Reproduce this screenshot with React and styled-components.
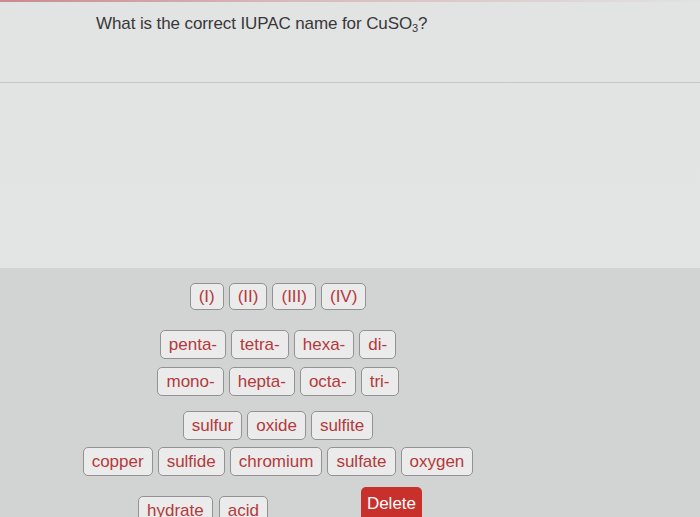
import React from 'react';
import styled, { createGlobalStyle } from 'styled-components';

const GlobalStyle = createGlobalStyle`
    html, body {
        margin: 0;
        padding: 0;
        background: #d3d4d4;
    }
    * {
        box-sizing: border-box;
    }
`;

const Page = styled.div`
    width: 700px;
    height: 517px;
    overflow: hidden;
    display: flex;
    flex-direction: column;
    font-family: "Liberation Sans", Arial, sans-serif;
    background: linear-gradient(180deg, #e2e3e3 0%, #e3e4e4 50%, #dcdddd 100%);
`;

const TopStrip = styled.div`
    flex-shrink: 0;
    height: 2px;
    background: linear-gradient(90deg, #c98a90 0%, #d8b8bb 40%, #e1e2e2 100%);
`;

const Header = styled.div`
    flex-shrink: 0;
    height: 81px;
    padding: 12px 0 0 96px;
    border-bottom: 1px solid #c6c7c7;
`;

const Question = styled.p`
    margin: 0;
    font-size: 17px;
    color: #383838;
    letter-spacing: -0.1px;

    sub {
        font-size: 11px;
        vertical-align: -3px;
        line-height: 0;
    }
`;

const Blank = styled.div`
    flex-shrink: 0;
    height: 185px;
`;

const AnswerArea = styled.div`
    flex-shrink: 0;
    flex-grow: 1;
    background: #d2d3d3;
    width: 556px;
    padding-top: 15px;
    display: flex;
    flex-direction: column;
    align-items: center;
    box-shadow: 144px 0 0 #d2d3d3;
`;

const Group = styled.div`
    display: flex;
    flex-direction: column;
    align-items: center;
    gap: ${ p => p.gap || 8 }px;
    margin-bottom: ${ p => p.after || 0 }px;
`;

const Row = styled.div`
    display: flex;
    gap: 5px;
    justify-content: center;
`;

const Chip = styled.div`
    height: ${ p => p.small ? 27 : 29 }px;
    padding: 0 8px;
    display: flex;
    align-items: center;
    background: #ebebeb;
    border: 1px solid #929292;
    border-radius: 5px;
    color: #b33a3b;
    font-size: 17px;
    white-space: nowrap;
`;

const BottomRow = styled.div`
    display: flex;
    align-items: flex-start;
    padding-left: 4px;
`;

const ChipPair = styled.div`
    display: flex;
    gap: 6px;
    margin-top: 9px;
    margin-right: 93px;
`;

const DeleteButton = styled.button`
    height: 34px;
    padding: 0 6px;
    border: none;
    border-radius: 5px;
    background: #c7302b;
    color: #ffffff;
    font-family: "Liberation Sans", Arial, sans-serif;
    font-size: 17px;
`;

const numerals = ['(I)', '(II)', '(III)', '(IV)'];
const prefixes = [['penta-', 'tetra-', 'hexa-', 'di-'], ['mono-', 'hepta-', 'octa-', 'tri-']];
const words = [['sulfur', 'oxide', 'sulfite'], ['copper', 'sulfide', 'chromium', 'sulfate', 'oxygen']];

export default function App() {
    return (
        <>
            <GlobalStyle />
            <Page>
                <TopStrip />
                <Header>
                    <Question>What is the correct IUPAC name for CuSO<sub>3</sub>?</Question>
                </Header>
                <Blank />
                <AnswerArea>
                    <Group after={ 20 }>
                        <Row>
                            { numerals.map(n => <Chip small key={ n }>{ n }</Chip>) }
                        </Row>
                    </Group>
                    <Group gap={ 8 } after={ 15 }>
                        { prefixes.map((row, i) => (
                            <Row key={ i }>
                                { row.map(w => <Chip key={ w }>{ w }</Chip>) }
                            </Row>
                        )) }
                    </Group>
                    <Group gap={ 7 } after={ 11 }>
                        { words.map((row, i) => (
                            <Row key={ i }>
                                { row.map(w => <Chip key={ w }>{ w }</Chip>) }
                            </Row>
                        )) }
                    </Group>
                    <BottomRow>
                        <ChipPair>
                            <Chip>hydrate</Chip>
                            <Chip>acid</Chip>
                        </ChipPair>
                        <DeleteButton>Delete</DeleteButton>
                    </BottomRow>
                </AnswerArea>
            </Page>
        </>
    );
}
